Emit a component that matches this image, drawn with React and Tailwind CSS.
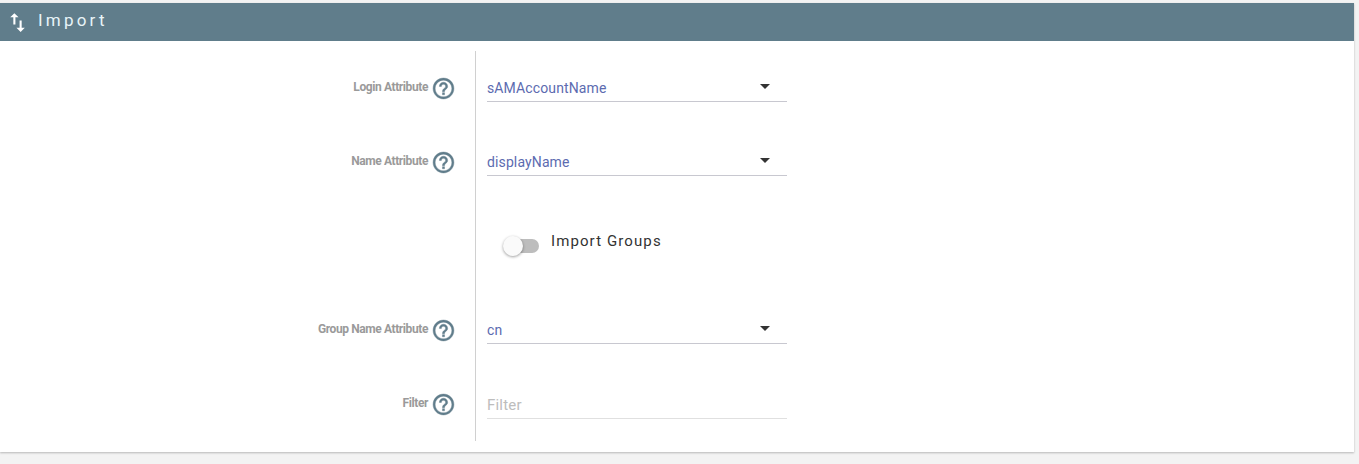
import { MdSwapVert } from "react-icons/md";

const HelpIcon = () => {
  return (
    <svg className="text-[#607d8b]" width="25" height="25" viewBox="0 0 24 24" fill="currentColor" stroke="currentColor" strokeWidth="0.4">
      <path d="M11 18h2v-2h-2v2zm1-16C6.48 2 2 6.48 2 12s4.48 10 10 10 10-4.48 10-10S17.52 2 12 2zm0 18c-4.41 0-8-3.59-8-8s3.59-8 8-8 8 3.59 8 8-3.59 8-8 8zm0-14c-2.21 0-4 1.79-4 4h2c0-1.1.9-2 2-2s2 .9 2 2c0 2-3 1.75-3 5h2c0-2.25 3-2.5 3-5 0-2.21-1.79-4-4-4z" />
    </svg>
  );
};

const SelectField = ({ value }) => {
  return (
    <div className="flex items-center justify-between w-[300px] h-[27px] border-b border-[#c8c8d0] pr-[17px]">
      <span className="text-[14px] tracking-[0.12px] text-[#5c6bb0]">{value}</span>
      <span className="mb-[4px] w-0 h-0 border-x-[5px] border-x-transparent border-t-[5px] border-t-[#333333]" />
    </div>
  );
};

const Label = ({ text }) => {
  return (
    <div className="flex items-center justify-end gap-[3px] w-[476px] pr-[19px] shrink-0 border-r border-[#d0d0d0] self-stretch">
      <span className="mb-[2px] text-[12px] font-bold tracking-[-0.4px] text-[#9a9a9a]">{text}</span>
      <HelpIcon />
    </div>
  );
};

const Row = ({ label, children }) => {
  return (
    <div className="flex h-[74px]">
      <Label text={label} />
      <div className="pl-[11px] pt-[24px]">{children}</div>
    </div>
  );
};

const App = () => {
  return (
    <div className="min-h-[464px] bg-[#f3f3f3] pt-[3px] font-['Roboto',sans-serif]">
      <div className="w-[1354px] bg-white shadow-[0_1px_2px_rgba(0,0,0,0.25)]">
        <div className="flex items-center h-[38px] pl-[5px] bg-[#607d8b] text-white">
          <MdSwapVert size={25} />
          <h1 className="ml-[8px] mb-[3px] text-[17px] tracking-[3.2px] text-[#e8f4f8]">Import</h1>
        </div>
        <div className="py-[10px] h-[411px]">
          <Row label="Login Attribute">
            <SelectField value="sAMAccountName" />
          </Row>
          <Row label="Name Attribute">
            <SelectField value="displayName" />
          </Row>
          <div className="flex h-[94px]">
            <div className="w-[476px] shrink-0 border-r border-[#d0d0d0]" />
            <div className="flex items-start pl-[27px] pt-[31px]">
              <div className="relative w-[36px] h-[20px] mt-[6px]">
                <div className="absolute left-[2px] top-[3px] w-[34px] h-[14px] rounded-full bg-[#bdbdbd]" />
                <div className="absolute left-0 top-0 w-[20px] h-[20px] rounded-full bg-[#fafafa] shadow-[0_1px_3px_rgba(0,0,0,0.4)]" />
              </div>
              <span className="ml-[12px] text-[15px] tracking-[1.1px] text-[#333333]">Import Groups</span>
            </div>
          </div>
          <Row label="Group Name Attribute">
            <SelectField value="cn" />
          </Row>
          <div className="flex h-[74px]">
            <Label text="Filter" />
            <div className="pl-[11px] pt-[25px]">
              <div className="flex items-center w-[300px] h-[27px] border-b border-[#e0e0e0]">
                <span className="text-[15px] tracking-[0.2px] text-[#bdbdbd]">Filter</span>
              </div>
            </div>
          </div>
        </div>
      </div>
    </div>
  );
};

export default App;
